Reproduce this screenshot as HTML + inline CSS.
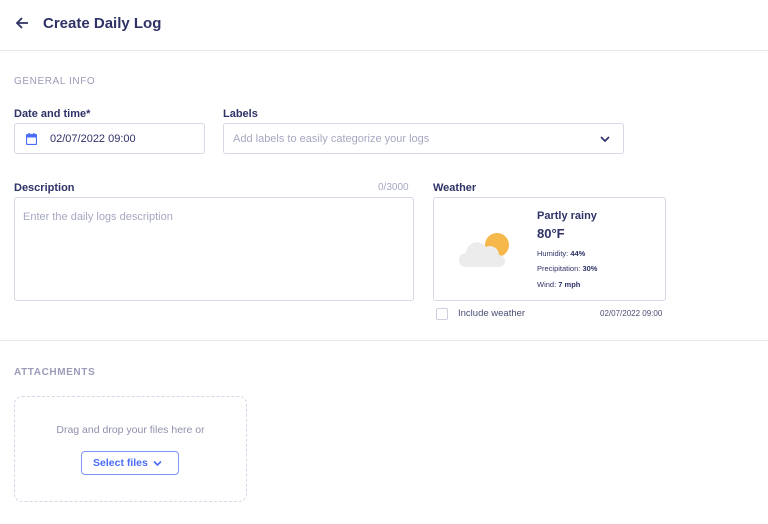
<!DOCTYPE html>
<html><head><style>
*{box-sizing:border-box;margin:0;padding:0}
body{width:768px;height:524px;background:#fff;font-family:"Liberation Sans",sans-serif;color:#2e3266;position:relative;overflow:hidden}
.a{position:absolute}
.lbl{font-size:11px;font-weight:bold;color:#2e3266}
.sec{font-size:10px;color:#9a9cb8;letter-spacing:.6px}
.box{border:1px solid #d8d9e6;border-radius:3px;background:#fff}
</style></head><body>
<svg class="a" style="left:14px;top:15px" width="16" height="16" viewBox="0 0 16 16"><path d="M14 8H3M8 3L3 8l5 5" stroke="#2e3266" stroke-width="1.8" fill="none"/></svg>
<div class="a" style="left:43px;top:15px;font-size:15px;font-weight:bold">Create Daily Log</div>
<div class="a" style="left:0;top:50px;width:768px;height:1px;background:#e6e6ef"></div>
<div class="a sec" style="left:14px;top:76px">GENERAL INFO</div>
<div class="a lbl" style="left:14px;top:108px">Date and time*</div>
<div class="a box" style="left:14px;top:123px;width:191px;height:31px"></div>
<svg class="a" style="left:26px;top:133px" width="11" height="12" viewBox="0 0 11 12"><rect x="0.5" y="1.5" width="10" height="10" rx="1" fill="none" stroke="#4a6cf7" stroke-width="1.2"/><rect x="0.5" y="1.5" width="10" height="3" fill="#4a6cf7"/><rect x="2.5" y="0" width="1.2" height="2.5" fill="#4a6cf7"/><rect x="7.3" y="0" width="1.2" height="2.5" fill="#4a6cf7"/></svg>
<div class="a" style="left:50px;top:133px;font-size:11px;color:#2e3266">02/07/2022 09:00</div>
<div class="a lbl" style="left:223px;top:108px">Labels</div>
<div class="a box" style="left:223px;top:123px;width:401px;height:31px"></div>
<div class="a" style="left:233px;top:133px;font-size:11px;color:#a6a8c2">Add labels to easily categorize your logs</div>
<svg class="a" style="left:600px;top:135px" width="10" height="8" viewBox="0 0 10 8"><path d="M1 2l4 4 4-4" stroke="#2e3266" stroke-width="1.7" fill="none"/></svg>
<div class="a lbl" style="left:14px;top:182px">Description</div>
<div class="a" style="left:378px;top:182px;font-size:10px;color:#a6a8c2">0/3000</div>
<div class="a box" style="left:14px;top:197px;width:400px;height:104px"></div>
<div class="a" style="left:23px;top:211px;font-size:11px;color:#a6a8c2">Enter the daily logs description</div>
<div class="a lbl" style="left:433px;top:182px">Weather</div>
<div class="a box" style="left:433px;top:197px;width:233px;height:104px"></div>
<svg class="a" style="left:458px;top:230px" width="56" height="38" viewBox="0 0 56 38"><circle cx="39" cy="15" r="12" fill="#f7b84b"/><path d="M8 37a7 7 0 0 1 0-14 11 11 0 0 1 20-6 9 9 0 0 1 13 8 6 6 0 0 1 0 12z" fill="#ececec"/></svg>
<div class="a" style="left:537px;top:210px;font-size:11px;font-weight:bold">Partly rainy</div>
<div class="a" style="left:537px;top:226px;font-size:13px;font-weight:bold">80°F</div>
<div class="a" style="left:537px;top:249px;font-size:7.5px">Humidity: <b>44%</b></div>
<div class="a" style="left:537px;top:264px;font-size:7.5px">Precipitation: <b>30%</b></div>
<div class="a" style="left:537px;top:280px;font-size:7.5px">Wind: <b>7 mph</b></div>
<div class="a" style="left:436px;top:308px;width:12px;height:12px;border:1px solid #cfd0de;border-radius:2px"></div>
<div class="a" style="left:458px;top:308px;font-size:9.5px;color:#4a4d73">Include weather</div>
<div class="a" style="left:600px;top:309px;font-size:8px;color:#4a4d73">02/07/2022 09:00</div>
<div class="a" style="left:0;top:340px;width:768px;height:1px;background:#e6e6ef"></div>
<div class="a sec" style="left:14px;top:367px;font-weight:bold">ATTACHMENTS</div>
<div class="a" style="left:14px;top:396px;width:233px;height:106px;border:1.5px dashed #d6d7e6;border-radius:8px"></div>
<div class="a" style="left:14px;top:424px;width:233px;text-align:center;font-size:10.5px;color:#8f91ad">Drag and drop your files here or</div>
<div class="a" style="left:81px;top:451px;width:98px;height:24px;border:1.5px solid #7d96f8;border-radius:4px"></div>
<div class="a" style="left:93px;top:457px;font-size:10.5px;font-weight:bold;color:#4a6cf7">Select files</div>
<svg class="a" style="left:153px;top:460px" width="9" height="7" viewBox="0 0 9 7"><path d="M1 1.5l3.5 3.5 3.5-3.5" stroke="#4a6cf7" stroke-width="1.6" fill="none"/></svg>
</body></html>
